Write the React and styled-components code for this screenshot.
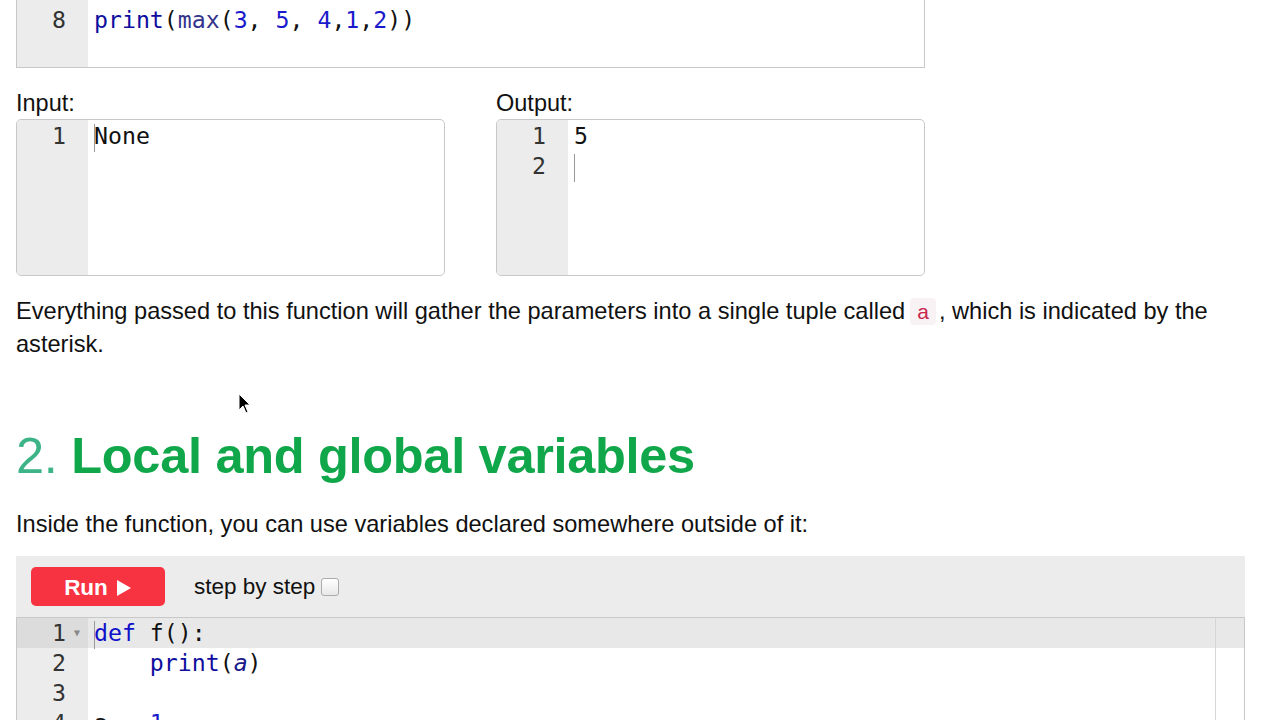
import styled, { createGlobalStyle } from "styled-components";

const Global = createGlobalStyle`
  body {
    margin: 0;
    background: #fff;
    font-family: "Liberation Sans", Arial, sans-serif;
    color: #111;
  }
`;

const Page = styled.div`
  position: relative;
  width: 1229px;
  padding: 0 0 0 16px;
  overflow: hidden;
  height: 720px;
`;

const Editor = styled.div`
  display: flex;
  width: ${(p) => p.$width || "100%"};
  box-sizing: border-box;
  border: 1px solid #c8c8c8;
  border-top: ${(p) => (p.$cut ? "none" : "1px solid #c8c8c8")};
  border-radius: ${(p) => (p.$round ? "5px" : "0")};
  height: ${(p) => p.$height || "auto"};
  overflow: hidden;
  background: #fff;
  font-family: "DejaVu Sans Mono", "Liberation Mono", monospace;
  font-size: 23.2px;
`;

const Gutter = styled.div`
  width: 71px;
  flex: none;
  background: #ececec;
  padding-top: ${(p) => p.$top || "0px"};
`;

const Num = styled.div`
  height: 30px;
  line-height: 30px;
  text-align: right;
  padding-right: 22px;
  position: relative;
  color: #333;
  background: ${(p) => (p.$active ? "#dcdcdc" : "transparent")};
`;

const Fold = styled.span`
  position: absolute;
  right: 8px;
  top: 0;
  font-size: 10px;
  color: #888;
`;

const Lines = styled.div`
  flex: 1;
  padding-top: ${(p) => p.$top || "0px"};
  position: relative;
`;

const Line = styled.div`
  height: 30px;
  line-height: 30px;
  padding-left: 6px;
  white-space: pre;
  color: #111;
  background: ${(p) => (p.$active ? "#e8e8e8" : "transparent")};
`;

const Caret = styled.span`
  display: inline-block;
  width: 1px;
  height: 28px;
  vertical-align: middle;
  background: #999;
  margin-right: -1px;
`;

const Fn = styled.span`
  color: #0d0d9e;
`;
const Builtin = styled.span`
  color: #34348c;
`;
const NumLit = styled.span`
  color: #1a1acc;
`;
const Kw = styled.span`
  color: #1010c8;
`;
const Var = styled.span`
  font-style: italic;
  color: #1a1a8a;
`;

const IoRow = styled.div`
  display: grid;
  grid-template-columns: 429px 429px;
  column-gap: 51px;
  margin-top: 23px;
`;

const IoCol = styled.div`
  display: flex;
  flex-direction: column;
  gap: 4px;
`;

const Label = styled.div`
  font-size: 23.5px;
  line-height: 24px;
`;

const Para = styled.p`
  margin: ${(p) => p.$top || "19px"} 0 0;
  font-size: 23.6px;
  line-height: 33px;
  width: 1229px;
`;

const Code = styled.code`
  font-family: "Liberation Sans", Arial, sans-serif;
  font-size: 21px;
  color: #c7254e;
  background: #f9f2f4;
  border-radius: 4px;
  padding: 2px 7px;
  margin: 0 3px 0 5px;
`;

const Heading = styled.h2`
  margin: 65px 0 0;
  font-size: 50.5px;
  line-height: 60px;
  font-weight: bold;
  color: #10a64a;
  letter-spacing: -0.3px;
`;

const HeadNum = styled.span`
  font-weight: normal;
  color: #3cb487;
`;

const Runner = styled.div`
  margin-top: 15px;
  background: #ececec;
`;

const Toolbar = styled.div`
  display: flex;
  align-items: center;
  gap: 29px;
  height: 61px;
  padding: 0 15px;
`;

const RunButton = styled.button`
  display: flex;
  align-items: center;
  justify-content: center;
  gap: 8px;
  width: 134px;
  height: 39px;
  border: none;
  border-radius: 5px;
  background: #f83341;
  color: #fff;
  font-family: "Liberation Sans", Arial, sans-serif;
  font-weight: bold;
  font-size: 22.5px;
  padding: 3px 0 0;
`;

const StepLabel = styled.label`
  display: flex;
  align-items: center;
  gap: 6px;
  font-size: 22.5px;
`;

const Check = styled.span`
  width: 16px;
  height: 16px;
  border: 1px solid #aaa;
  border-radius: 3px;
  background: linear-gradient(#fff, #e8e8e8);
`;

const Margin = styled.div`
  position: absolute;
  top: 0;
  bottom: 0;
  right: 28px;
  width: 1px;
  background: #d6d6d6;
`;

const Pointer = styled.svg`
  position: absolute;
  left: 238px;
  top: 393px;
`;

const App = () => {
  return (
    <>
      <Global />
      <Page>
        <Editor $cut $width="909px">
          <Gutter $top="5px">
            <Num>8</Num>
            <div style={{ height: 32 }} />
          </Gutter>
          <Lines $top="5px">
            <Line>
              <Fn>print</Fn>(<Builtin>max</Builtin>(<NumLit>3</NumLit>, <NumLit>5</NumLit>, <NumLit>4</NumLit>,<NumLit>1</NumLit>,<NumLit>2</NumLit>))
            </Line>
          </Lines>
        </Editor>

        <IoRow>
          <IoCol>
            <Label>Input:</Label>
            <Editor $round $height="157px">
              <Gutter $top="1px">
                <Num>1</Num>
              </Gutter>
              <Lines $top="1px">
                <Line>
                  <Caret />None
                </Line>
              </Lines>
            </Editor>
          </IoCol>
          <IoCol>
            <Label>Output:</Label>
            <Editor $round $height="157px">
              <Gutter $top="1px">
                <Num>1</Num>
                <Num>2</Num>
              </Gutter>
              <Lines $top="1px">
                <Line>5</Line>
                <Line>
                  <Caret />
                </Line>
              </Lines>
            </Editor>
          </IoCol>
        </IoRow>

        <Para>
          Everything passed to this function will gather the parameters into a single tuple called
          <Code>a</Code>, which is indicated by the asterisk.
        </Para>

        <Heading>
          <HeadNum>2.</HeadNum> Local and global variables
        </Heading>

        <Para $top="22px">
          Inside the function, you can use variables declared somewhere outside of it:
        </Para>

        <Runner>
          <Toolbar>
            <RunButton>
              Run
              <svg width="16" height="18" viewBox="0 0 16 18">
                <path d="M1 1 L15 9 L1 17 Z" fill="#fff" />
              </svg>
            </RunButton>
            <StepLabel>
              step by step <Check />
            </StepLabel>
          </Toolbar>
          <Editor>
            <Gutter>
              <Num $active>
                1<Fold>▼</Fold>
              </Num>
              <Num>2</Num>
              <Num>3</Num>
              <Num>4</Num>
            </Gutter>
            <Lines>
              <Margin />
              <Line $active>
                <Caret />
                <Kw>def</Kw> f():
              </Line>
              <Line>
                {"    "}
                <Fn>print</Fn>(<Var>a</Var>)
              </Line>
              <Line> </Line>
              <Line>
                a = <NumLit>1</NumLit>
              </Line>
            </Lines>
          </Editor>
        </Runner>

        <Pointer width="14" height="22" viewBox="0 0 14 22">
          <path d="M1 1 L1 17 L5 13 L8 20 L10 19 L7 12 L12 12 Z" fill="#000" stroke="#fff" strokeWidth="1" />
        </Pointer>
      </Page>
    </>
  );
};

export default App;
